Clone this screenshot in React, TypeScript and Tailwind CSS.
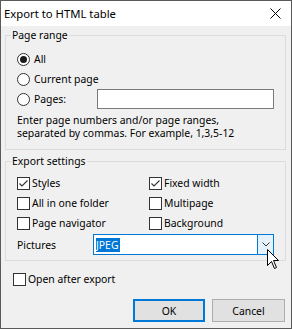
import React from "react";

function Radio({ checked }: { checked?: boolean }) {
  return (
    <span className="w-[13px] h-[13px] shrink-0 rounded-full border border-[#333333] bg-white flex items-center justify-center">
      {checked && <span className="w-[7px] h-[7px] rounded-full bg-[#1a1a1a]" />}
    </span>
  );
}

function Check({ checked }: { checked?: boolean }) {
  return (
    <span className="w-[13px] h-[13px] shrink-0 border border-[#333333] bg-white flex items-center justify-center">
      {checked && (
        <svg width="11" height="11" viewBox="0 0 11 11">
          <polyline points="1.5,5.5 4,8 9.5,2.5" fill="none" stroke="#333333" strokeWidth="1.1" />
        </svg>
      )}
    </span>
  );
}

function CheckRow({ label, checked }: { label: string; checked?: boolean }) {
  return (
    <div className="flex items-center h-[20px] gap-[2px]">
      <Check checked={checked} />
      <span>{label}</span>
    </div>
  );
}

export default function App() {
  return (
    <div className="relative w-[292px] h-[329px] border border-[#5a5a5a] bg-[#f0f0f0] text-[10.4px] text-black flex flex-col font-['Segoe_UI','Noto_Sans',sans-serif] leading-[16px] overflow-hidden">
      <div className="h-[25px] bg-white flex items-center justify-between pl-[3px] pr-[10px] shrink-0">
        <span className="text-[11.3px]">Export to HTML table</span>
        <svg width="11" height="11" viewBox="0 0 11 11">
          <path d="M0.5 0.5 L10.5 10.5 M10.5 0.5 L0.5 10.5" stroke="#000" strokeWidth="1" />
        </svg>
      </div>

      <fieldset className="ml-[4px] mr-[5px] mt-[1px] border border-[#dcdcdc] p-0">
        <legend className="ml-[5px] px-[1px]">Page range</legend>
        <div className="pl-[11px] pr-[11px] pt-[6px] pb-[9px]">
          <div className="flex items-center h-[20px] gap-[4px]">
            <Radio checked />
            <span>All</span>
          </div>
          <div className="flex items-center h-[20px] gap-[4px]">
            <Radio />
            <span>Current page</span>
          </div>
          <div className="flex items-center h-[20px]">
            <div className="w-[80px] flex items-center gap-[4px]">
              <Radio />
              <span>Pages:</span>
            </div>
            <div className="w-[177px] h-[20px] border border-[#7a7a7a] bg-white" />
          </div>
          <div className="mt-[5px] leading-[13px]">
            <div>Enter page numbers and/or page ranges,</div>
            <div>separated by commas. For example, 1,3,5-12</div>
          </div>
        </div>
      </fieldset>

      <fieldset className="ml-[4px] mr-[5px] mt-[3px] border border-[#dcdcdc] p-0">
        <legend className="ml-[5px] px-[1px]">Export settings</legend>
        <div className="pl-[11px] pt-[4px] pb-[5px]">
          <div className="grid grid-cols-[132px_1fr]">
            <CheckRow label="Styles" checked />
            <CheckRow label="Fixed width" checked />
            <CheckRow label="All in one folder" />
            <CheckRow label="Multipage" />
            <CheckRow label="Page navigator" />
            <CheckRow label="Background" />
          </div>
          <div className="flex items-center h-[21px] mt-[1px]">
            <span className="w-[76px]">Pictures</span>
            <div className="w-[181px] h-[21px] border border-[#0078d7] bg-white flex">
              <div className="flex-1 flex items-center pl-[2px]">
                <span className="bg-[#0078d7] text-white leading-[14px] pr-[2px]">JPEG</span>
              </div>
              <div className="w-[16px] border-l border-[#0078d7] bg-[#e5f1fb] flex items-center justify-center">
                <svg width="8" height="5" viewBox="0 0 8 5">
                  <polyline points="0.5,0.5 4,4 7.5,0.5" fill="none" stroke="#333" strokeWidth="1" />
                </svg>
              </div>
            </div>
          </div>
        </div>
      </fieldset>

      <div className="flex items-center h-[20px] mt-[8px] pl-[12px] gap-[2px]">
        <Check />
        <span>Open after export</span>
      </div>

      <div className="flex justify-end gap-[7px] pr-[6px] mt-[10px]">
        <button className="w-[72px] h-[23px] bg-[#e1e1e1] border-2 border-[#0078d7] flex items-center justify-center">OK</button>
        <button className="w-[73px] h-[23px] bg-[#e1e1e1] border border-[#adadad] flex items-center justify-center">Cancel</button>
      </div>

      <svg className="absolute left-[266px] top-[248px]" width="13" height="21" viewBox="0 0 13 21">
        <path d="M0.5 0.5 L0.5 16.5 L4.5 12.5 L7.5 19.5 L9.5 18.5 L6.5 11.5 L11.5 11.5 Z" fill="#fff" stroke="#000" strokeWidth="1" strokeLinejoin="miter" />
      </svg>
    </div>
  );
}
